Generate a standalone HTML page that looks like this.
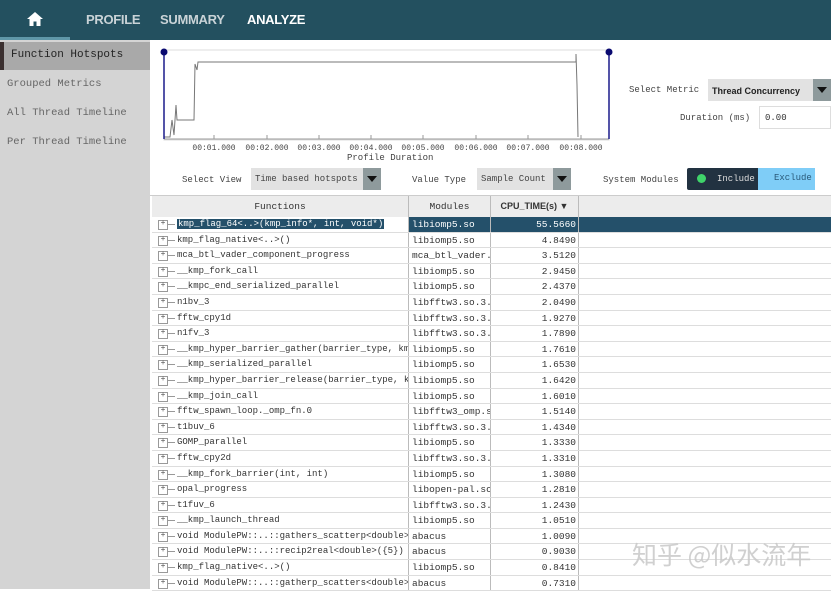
<!DOCTYPE html><html><head><meta charset="utf-8"><style>
*{margin:0;padding:0;box-sizing:border-box}
body{width:831px;height:589px;overflow:hidden;position:relative;background:#fff;font-family:"Liberation Mono","Noto Sans CJK SC",monospace;color:#333}
.top{position:absolute;left:0;top:0;width:831px;height:40px;background:#23505f}
.nav{position:absolute;top:12px;font:bold 13px "Liberation Sans",sans-serif;color:#c9d3d7;letter-spacing:-0.3px}
.ul{position:absolute;left:0;top:37px;width:70px;height:3px;background:#5f97a8}
.side{position:absolute;left:0;top:40px;width:150px;height:549px;background:#d4d4d4}
.si{position:absolute;left:7px;color:#666;font-family:"Liberation Mono",monospace;font-size:10.5px}
.sel{position:absolute;left:0;top:42px;width:150px;height:28px;background:#a9a9a9;border-left:4px solid #3b3030}
.lbl{position:absolute;font-size:9px;color:#444;white-space:nowrap}
.dd{position:absolute;height:22px;background:#e2e2e2;font-size:9px;color:#444;padding:6px 4px;white-space:nowrap}
.dd b{position:absolute;right:0;top:0;width:18px;height:22px;background:#8e9a9c}
.dd b:after{content:"";position:absolute;left:4px;top:8px;border:5px solid transparent;border-top:6px solid #111}
.hd{position:absolute;top:196px;height:21px;background:#ececec;border-right:1px solid #bbb;font-size:9.5px;color:#333;text-align:center;line-height:21px}
.rows{position:absolute;left:152px;top:217px;width:679px}
.r{height:15.6px;display:flex;font-size:9px;line-height:15px;border-bottom:1px solid #ddd;white-space:nowrap}
.r .f{width:257px;overflow:hidden;position:relative;padding-left:25px;border-right:1px solid #bbb}
.r .f:before{content:"+";position:absolute;left:6px;top:3px;width:8px;height:8px;border:1px solid #999;font-size:8px;line-height:6px;text-align:center;color:#555;background:#fff}
.r .f:after{content:"";position:absolute;left:15px;top:7px;width:8px;border-top:1px solid #999}
.r .m{width:82px;overflow:hidden;padding-left:3px;border-right:1px solid #bbb;font-size:9.5px}
.r .c{width:88px;text-align:right;padding-right:2px;border-right:1px solid #bbb;font-size:9.5px}
.r.s .f span,.r.s .m,.r.s .c,.r.s .x{background:#24506a;color:#fff}
.r.s .f span{padding:0 1px}
.r .x{flex:1}
</style></head><body>
<div class="top"></div>
<svg style="position:absolute;left:26px;top:11px" width="18" height="16" viewBox="0 0 18 16"><path d="M9 1 L1 8 L3.5 8 L3.5 15 L7.5 15 L7.5 10.5 L10.5 10.5 L10.5 15 L14.5 15 L14.5 8 L17 8 Z" fill="#fff"/></svg>
<div class="nav" style="left:86px">PROFILE</div>
<div class="nav" style="left:160px">SUMMARY</div>
<div class="nav" style="left:247px;color:#fff">ANALYZE</div>
<div class="ul"></div>
<div class="side"></div>
<div class="sel"></div>
<div class="si" style="left:11px;top:49px;color:#222;font-size:11px">Function Hotspots</div>
<div class="si" style="top:78px">Grouped Metrics</div>
<div class="si" style="top:107px">All Thread Timeline</div>
<div class="si" style="top:136px">Per Thread Timeline</div>
<svg style="position:absolute;left:150px;top:40px" width="481" height="115">
<rect x="14" y="10" width="445" height="90" fill="#fff" stroke="#ddd"/>
<line x1="14" y1="99" x2="459" y2="99" stroke="#999"/>
<g stroke="#999"><line x1="64" y1="95" x2="64" y2="99"/><line x1="117" y1="95" x2="117" y2="99"/><line x1="169" y1="95" x2="169" y2="99"/><line x1="221" y1="95" x2="221" y2="99"/><line x1="273" y1="95" x2="273" y2="99"/><line x1="326" y1="95" x2="326" y2="99"/><line x1="378" y1="95" x2="378" y2="99"/><line x1="431" y1="95" x2="431" y2="99"/></g>
<polyline points="14,97 20,97 22,80 24,95 26,65 27,80 44,80 45,24 47,30 48,22 426,22 426,14 427,45 428,97" fill="none" stroke="#777" stroke-width="1"/>
<line x1="14" y1="12" x2="14" y2="99" stroke="#1a1a8a" stroke-width="1.5"/><circle cx="14" cy="12" r="3.5" fill="#0a0a70"/>
<line x1="459" y1="12" x2="459" y2="99" stroke="#1a1a8a" stroke-width="1.5"/><circle cx="459" cy="12" r="3.5" fill="#0a0a70"/>
<g font-family="Liberation Mono" font-size="8" fill="#444" text-anchor="middle"><text x="64" y="110">00:01.000</text><text x="117" y="110">00:02.000</text><text x="169" y="110">00:03.000</text><text x="221" y="110">00:04.000</text><text x="273" y="110">00:05.000</text><text x="326" y="110">00:06.000</text><text x="378" y="110">00:07.000</text><text x="431" y="110">00:08.000</text></g>
</svg>
<div class="lbl" style="left:347px;top:153px">Profile Duration</div>
<div class="lbl" style="left:629px;top:85px">Select Metric</div>
<div class="dd" style="left:708px;top:79px;width:123px;font:bold 9px 'Liberation Sans',sans-serif;color:#222;padding:7px 4px">Thread Concurrency<b></b></div>
<div class="lbl" style="left:680px;top:113px">Duration (ms)</div>
<div style="position:absolute;left:759px;top:106px;width:72px;height:23px;border:1px solid #ddd;font-size:9px;padding:6px 5px">0.00</div>
<div class="lbl" style="left:182px;top:175px">Select View</div>
<div class="dd" style="left:251px;top:168px;width:130px">Time based hotspots<b></b></div>
<div class="lbl" style="left:412px;top:175px">Value Type</div>
<div class="dd" style="left:477px;top:168px;width:94px">Sample Count<b></b></div>
<div class="lbl" style="left:603px;top:175px">System Modules</div>
<div style="position:absolute;left:687px;top:168px;width:71px;height:22px;background:#223241;border-radius:2px 0 0 2px;color:#ddd;font-size:9px;padding:6px 0 0 30px">Include</div>
<div style="position:absolute;left:697px;top:174px;width:9px;height:9px;border-radius:50%;background:#3fd46a"></div>
<div style="position:absolute;left:758px;top:168px;width:57px;height:22px;background:#7fcdf7;color:#2a5a7a;font-size:9px;padding:5px 0 0 16px">Exclude</div>
<div style="position:absolute;left:150px;top:195px;width:681px;height:1px;background:#ccc"></div>
<div class="hd" style="left:152px;width:257px">Functions</div>
<div class="hd" style="left:409px;width:82px">Modules</div>
<div class="hd" style="left:491px;width:88px;font-family:'Liberation Sans',sans-serif;font-weight:bold;font-size:9px">CPU_TIME(s) ▼</div>
<div class="hd" style="left:579px;width:252px;border-right:0"></div>
<div class="rows">
<div class="r s"><div class="f"><span>kmp_flag_64&lt;..&gt;(kmp_info*, int, void*)</span></div><div class="m">libiomp5.so</div><div class="c">55.5660</div><div class="x"></div></div>
<div class="r"><div class="f">kmp_flag_native&lt;..&gt;()</div><div class="m">libiomp5.so</div><div class="c">4.8490</div><div class="x"></div></div>
<div class="r"><div class="f">mca_btl_vader_component_progress</div><div class="m">mca_btl_vader.so</div><div class="c">3.5120</div><div class="x"></div></div>
<div class="r"><div class="f">__kmp_fork_call</div><div class="m">libiomp5.so</div><div class="c">2.9450</div><div class="x"></div></div>
<div class="r"><div class="f">__kmpc_end_serialized_parallel</div><div class="m">libiomp5.so</div><div class="c">2.4370</div><div class="x"></div></div>
<div class="r"><div class="f">n1bv_3</div><div class="m">libfftw3.so.3.6</div><div class="c">2.0490</div><div class="x"></div></div>
<div class="r"><div class="f">fftw_cpy1d</div><div class="m">libfftw3.so.3.6</div><div class="c">1.9270</div><div class="x"></div></div>
<div class="r"><div class="f">n1fv_3</div><div class="m">libfftw3.so.3.6</div><div class="c">1.7890</div><div class="x"></div></div>
<div class="r"><div class="f">__kmp_hyper_barrier_gather(barrier_type, kmp</div><div class="m">libiomp5.so</div><div class="c">1.7610</div><div class="x"></div></div>
<div class="r"><div class="f">__kmp_serialized_parallel</div><div class="m">libiomp5.so</div><div class="c">1.6530</div><div class="x"></div></div>
<div class="r"><div class="f">__kmp_hyper_barrier_release(barrier_type, k</div><div class="m">libiomp5.so</div><div class="c">1.6420</div><div class="x"></div></div>
<div class="r"><div class="f">__kmp_join_call</div><div class="m">libiomp5.so</div><div class="c">1.6010</div><div class="x"></div></div>
<div class="r"><div class="f">fftw_spawn_loop._omp_fn.0</div><div class="m">libfftw3_omp.so</div><div class="c">1.5140</div><div class="x"></div></div>
<div class="r"><div class="f">t1buv_6</div><div class="m">libfftw3.so.3.6</div><div class="c">1.4340</div><div class="x"></div></div>
<div class="r"><div class="f">GOMP_parallel</div><div class="m">libiomp5.so</div><div class="c">1.3330</div><div class="x"></div></div>
<div class="r"><div class="f">fftw_cpy2d</div><div class="m">libfftw3.so.3.6</div><div class="c">1.3310</div><div class="x"></div></div>
<div class="r"><div class="f">__kmp_fork_barrier(int, int)</div><div class="m">libiomp5.so</div><div class="c">1.3080</div><div class="x"></div></div>
<div class="r"><div class="f">opal_progress</div><div class="m">libopen-pal.so.</div><div class="c">1.2810</div><div class="x"></div></div>
<div class="r"><div class="f">t1fuv_6</div><div class="m">libfftw3.so.3.6</div><div class="c">1.2430</div><div class="x"></div></div>
<div class="r"><div class="f">__kmp_launch_thread</div><div class="m">libiomp5.so</div><div class="c">1.0510</div><div class="x"></div></div>
<div class="r"><div class="f">void ModulePW::..::gathers_scatterp&lt;double&gt;</div><div class="m">abacus</div><div class="c">1.0090</div><div class="x"></div></div>
<div class="r"><div class="f">void ModulePW::..::recip2real&lt;double&gt;({5})</div><div class="m">abacus</div><div class="c">0.9030</div><div class="x"></div></div>
<div class="r"><div class="f">kmp_flag_native&lt;..&gt;()</div><div class="m">libiomp5.so</div><div class="c">0.8410</div><div class="x"></div></div>
<div class="r"><div class="f">void ModulePW::..::gatherp_scatters&lt;double&gt;</div><div class="m">abacus</div><div class="c">0.7310</div><div class="x"></div></div>
</div>
<div style="position:absolute;left:632px;top:536px;font:25px 'Noto Sans CJK SC',sans-serif;color:rgba(200,200,200,0.85);white-space:nowrap">知乎 @似水流年</div>
</body></html>
